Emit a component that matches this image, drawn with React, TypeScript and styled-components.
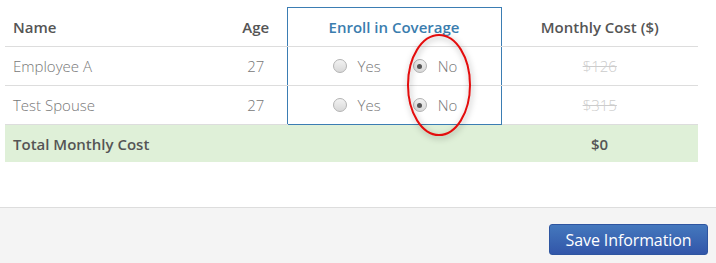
import styled, { createGlobalStyle } from 'styled-components'

const GlobalStyle = createGlobalStyle`
  html, body {
    margin: 0;
    padding: 0;
    background: #fff;
    font-family: 'Open Sans', 'Liberation Sans', sans-serif;
  }
`

const Page = styled.div`
  width: 716px;
  height: 263px;
  display: flex;
  flex-direction: column;
  overflow: hidden;
`

const Body = styled.div`
  position: relative;
  flex: 1;
  padding: 7px 18px 0 5px;
`

const Table = styled.table`
  width: 693px;
  border-collapse: collapse;
  table-layout: fixed;
`

const Th = styled.th<{ $align?: string; $enroll?: boolean }>`
  height: 38px;
  padding: 0 8px;
  font-size: 15px;
  font-weight: 600;
  color: ${(p) => (p.$enroll ? '#3a7dae' : '#555')};
  text-align: ${(p) => p.$align || 'left'};
  border-bottom: 1px solid #ddd;
  ${(p) => p.$enroll && 'border: 1px solid #3b7db3; border-bottom-color: #ddd;'}
`

const Td = styled.td<{ $align?: string; $enroll?: boolean; $last?: boolean }>`
  height: 38px;
  padding: 0 8px;
  font-size: 15px;
  font-weight: 300;
  color: #777;
  text-align: ${(p) => p.$align || 'left'};
  border-bottom: 1px solid #ddd;
  ${(p) => p.$enroll && 'border-left: 1px solid #3b7db3; border-right: 1px solid #3b7db3;'}
  ${(p) => p.$last && p.$enroll && 'border-bottom-color: #3b7db3;'}
`

const TotalRow = styled.tr`
  background: #dff0d8;
`

const TotalCell = styled.td<{ $align?: string }>`
  height: 37px;
  padding: 0 8px;
  font-size: 15px;
  font-weight: 600;
  color: #555;
  text-align: ${(p) => p.$align || 'left'};
`

const Struck = styled.span`
  color: #ccc;
  text-decoration: line-through;
`

const RadioGroup = styled.div`
  display: flex;
  justify-content: center;
  align-items: center;
  gap: 32px;
  padding-left: 2px;
`

const Option = styled.label`
  display: flex;
  align-items: center;
  gap: 11px;
`

const Radio = styled.span<{ $checked?: boolean }>`
  width: 12px;
  height: 12px;
  border-radius: 50%;
  border: 1px solid #b4b4b4;
  background: linear-gradient(#f2f2f2, #d8d8d8);
  display: flex;
  align-items: center;
  justify-content: center;
  &::after {
    content: '';
    display: ${(p) => (p.$checked ? 'block' : 'none')};
    width: 5px;
    height: 5px;
    border-radius: 50%;
    background: #555;
  }
`

const Ring = styled.svg`
  position: absolute;
  left: 400px;
  top: 30px;
  overflow: visible;
  pointer-events: none;
`

const Footer = styled.div`
  height: 56px;
  border-top: 1px solid #ddd;
  background: #f4f4f4;
  display: flex;
  justify-content: flex-end;
  align-items: flex-start;
  padding: 16px 8px 0 0;
  box-sizing: border-box;
  flex: none;
`

const SaveButton = styled.button`
  width: 159px;
  height: 31px;
  border: 1px solid #2e55a0;
  border-radius: 3px;
  background: linear-gradient(#4478bd, #3256a9);
  color: #fff;
  font-family: 'Open Sans', 'Liberation Sans', sans-serif;
  font-size: 16px;
  letter-spacing: -0.1px;
  padding: 0;
`

const rows = [
  { name: 'Employee A', age: 27, cost: '$126' },
  { name: 'Test Spouse', age: 27, cost: '$315' },
]

export default function App() {
  return (
    <Page>
      <GlobalStyle />
      <Body>
        <Table>
          <colgroup>
            <col style={{ width: 220 }} />
            <col style={{ width: 62 }} />
            <col style={{ width: 214 }} />
            <col style={{ width: 197 }} />
          </colgroup>
          <thead>
            <tr>
              <Th>Name</Th>
              <Th $align="center">Age</Th>
              <Th $align="center" $enroll>Enroll in Coverage</Th>
              <Th $align="center">Monthly Cost ($)</Th>
            </tr>
          </thead>
          <tbody>
            {rows.map((r, i) => (
              <tr key={r.name}>
                <Td>{r.name}</Td>
                <Td $align="center">{r.age}</Td>
                <Td $enroll $last={i === rows.length - 1}>
                  <RadioGroup>
                    <Option>
                      <Radio />
                      Yes
                    </Option>
                    <Option>
                      <Radio $checked />
                      No
                    </Option>
                  </RadioGroup>
                </Td>
                <Td $align="center">
                  <Struck>{r.cost}</Struck>
                </Td>
              </tr>
            ))}
            <TotalRow>
              <TotalCell colSpan={3}>Total Monthly Cost</TotalCell>
              <TotalCell $align="center">$0</TotalCell>
            </TotalRow>
          </tbody>
        </Table>
        <Ring width="76" height="110">
          <defs>
            <filter id="sh" x="-50%" y="-50%" width="200%" height="200%">
              <feDropShadow dx="1" dy="2" stdDeviation="3" floodColor="#000" floodOpacity="0.35" />
            </filter>
          </defs>
          <ellipse cx="39" cy="55" rx="31" ry="50" fill="none" stroke="#e31010" strokeWidth="2" filter="url(#sh)" />
        </Ring>
      </Body>
      <Footer>
        <SaveButton>Save Information</SaveButton>
      </Footer>
    </Page>
  )
}
